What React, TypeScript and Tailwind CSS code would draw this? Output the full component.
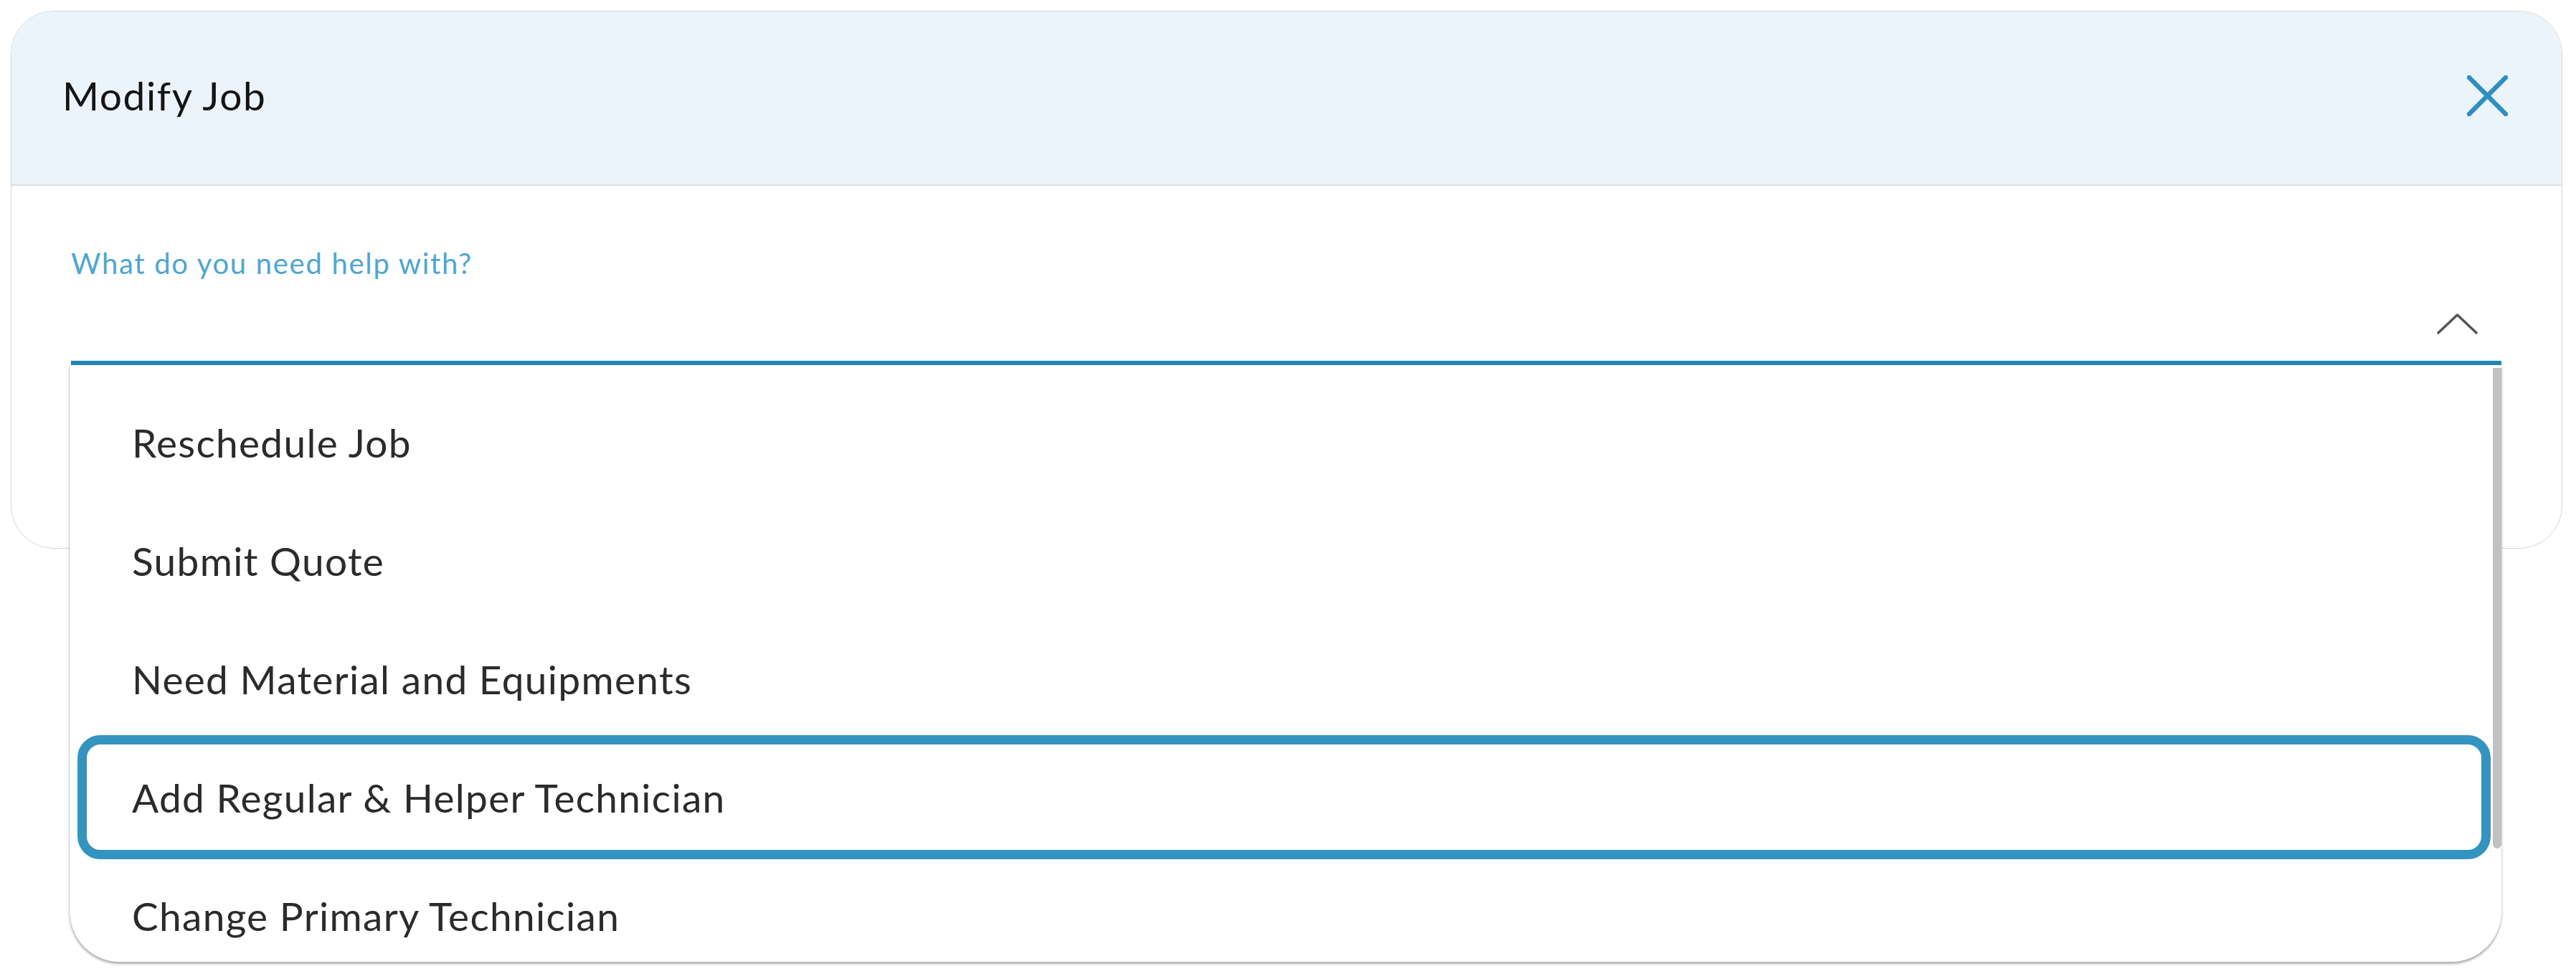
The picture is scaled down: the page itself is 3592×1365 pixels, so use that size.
import React from "react";

const items = [
  "Reschedule Job",
  "Submit Quote",
  "Need Material and Equipments",
  "Add Regular & Helper Technician",
  "Change Primary Technician",
];

export default function App() {
  return (
    <div
      className="min-h-screen w-full bg-white pl-[15px] pr-[19px] pt-[15px]"
      style={{ fontFamily: "Lato, 'Noto Sans', sans-serif" }}
    >
      <div className="relative h-[750px] rounded-[60px] border border-[#d6d6d6] bg-white">
        {/* Header */}
        <div className="flex h-[243px] items-center justify-between rounded-t-[60px] border-b-2 border-[#dcdcdc] bg-[#ebf4fa] pb-[6px] pl-[71px] pr-[75px]">
          <span className="text-[55px] leading-none tracking-[1.6px] text-[#141414]">Modify Job</span>
          <svg width="57" height="57" viewBox="0 0 57 57" fill="none">
            <path d="M3 3 L54 54 M54 3 L3 54" stroke="#2f90c0" strokeWidth="6.5" strokeLinecap="round" />
          </svg>
        </div>

        {/* Body */}
        <div className="pl-[83px] pr-[84px] pt-[84px]">
          <div className="relative">
            <div className="text-[40px] leading-[48px] tracking-[1.7px] text-[#4ea6cf]">What do you need help with?</div>
            <div className="flex h-[118px] items-end justify-end border-b-[6px] border-[#2186b6] pb-[37px] pr-[33px]">
              <svg width="57" height="29" viewBox="0 0 57 29" fill="none">
                <path d="M2 27 L28.5 2 L55 27" stroke="#555555" strokeWidth="3.5" strokeLinecap="round" strokeLinejoin="round" />
              </svg>
            </div>

            {/* Dropdown menu */}
            <div className="absolute left-[-2px] right-0 top-full z-10 h-[832px] overflow-hidden rounded-b-[70px] border-l border-[#ececec] bg-white shadow-[0_3px_3px_rgba(0,0,0,0.28),0_1px_6px_rgba(0,0,0,0.08)]">
              <div className="absolute right-0 top-[4px] h-[670px] w-[12px] rounded-b-[6px] bg-[#c1c1c1]" />
              <div className="flex flex-col pt-[26px]">
                {items.map((it, i) => (
                  <div key={it} className="relative flex h-[165px] items-center pl-[86px] text-[55px] leading-none tracking-[1.3px] text-[#2b2b2b]">
                    {i === 3 && (
                      <div className="pointer-events-none absolute bottom-[-3px] left-[10px] right-[15px] top-[-5px] rounded-[32px] border-[13px] border-[#3494bf]" />
                    )}
                    <span className="relative">{it}</span>
                  </div>
                ))}
              </div>
            </div>
          </div>
        </div>
      </div>
    </div>
  );
}
